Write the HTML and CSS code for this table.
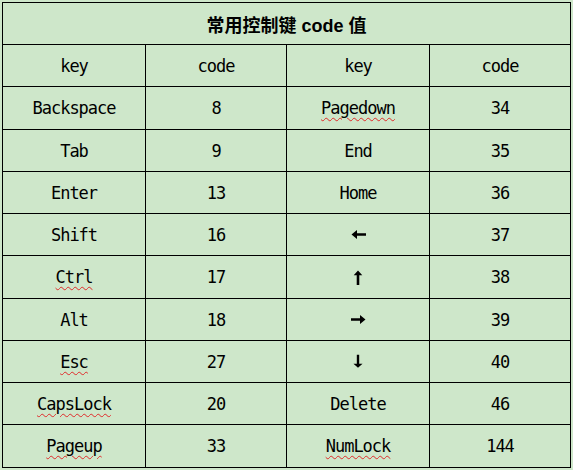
FILE: index.html
```
<!DOCTYPE html>
<html lang="zh">
<head>
<meta charset="utf-8">
<title>常用控制键 code 值</title>
<link rel="stylesheet" href="styles.css">
</head>
<body>
<div class="sheet">
  <div class="grid">
    <div class="cell title">常用控制键 code 值</div>

    <div class="cell">key</div><div class="cell">code</div><div class="cell">key</div><div class="cell">code</div>

    <div class="cell">Backspace</div><div class="cell">8</div><div class="cell"><span class="spell">Pagedown</span></div><div class="cell">34</div>

    <div class="cell">Tab</div><div class="cell">9</div><div class="cell">End</div><div class="cell">35</div>

    <div class="cell">Enter</div><div class="cell">13</div><div class="cell">Home</div><div class="cell">36</div>

    <div class="cell">Shift</div><div class="cell">16</div>
    <div class="cell"><svg class="arr-h" viewBox="0 0 15 11" aria-label="←"><path d="M0.5 5.5 L6 1 L6 4.3 L15 4.3 L15 6.7 L6 6.7 L6 10 Z" fill="#000"/></svg></div>
    <div class="cell">37</div>

    <div class="cell"><span class="spell">Ctrl</span></div><div class="cell">17</div>
    <div class="cell"><svg class="arr-v" viewBox="0 0 9 14" aria-label="↑"><path d="M4.5 0.5 L8.5 5 L5.7 5 L5.7 14 L3.3 14 L3.3 5 L0.5 5 Z" fill="#000"/></svg></div>
    <div class="cell">38</div>

    <div class="cell">Alt</div><div class="cell">18</div>
    <div class="cell"><svg class="arr-h" viewBox="0 0 15 11" aria-label="→"><path d="M14.5 5.5 L9 1 L9 4.3 L0 4.3 L0 6.7 L9 6.7 L9 10 Z" fill="#000"/></svg></div>
    <div class="cell">39</div>

    <div class="cell"><span class="spell">Esc</span></div><div class="cell">27</div>
    <div class="cell"><svg class="arr-v" viewBox="0 0 11 15" aria-label="↓"><path d="M5.5 14.5 L10.5 10 L6.8 10 L6.8 0 L4.2 0 L4.2 10 L0.5 10 Z" fill="#000"/></svg></div>
    <div class="cell">40</div>

    <div class="cell"><span class="spell">CapsLock</span></div><div class="cell">20</div><div class="cell">Delete</div><div class="cell">46</div>

    <div class="cell"><span class="spell">Pageup</span></div><div class="cell">33</div><div class="cell"><span class="spell">NumLock</span></div><div class="cell">144</div>
  </div>
</div>
</body>
</html>
```
FILE: styles.css
```
html, body {
  margin: 0;
  padding: 0;
  background: #cee7ca;
}

.sheet {
  padding: 2px 0 0 2px;
  width: 571px;
  height: 468px;
  overflow: hidden;
}

.grid {
  display: grid;
  width: 569px;
  box-sizing: border-box;
  grid-template-columns: 142px 140px 142px 140px;
  grid-template-rows: 41px 41px 42px 41px 41px 41px 42px 41px 41px 41px 42px;
  gap: 1px;
  padding: 1px;
  background: #000;
}

.cell {
  background: #cee7ca;
  display: flex;
  align-items: center;
  justify-content: center;
  font-family: "DejaVu Sans Mono", monospace;
  font-size: 17px;
  letter-spacing: -1px;
  color: #000;
  white-space: nowrap;
}

.title {
  grid-column: 1 / 5;
  font-family: "Liberation Sans", "Noto Sans CJK SC", sans-serif;
  font-weight: bold;
  font-size: 18px;
  letter-spacing: 0;
  padding-top: 1px;
}

.spell {
  text-decoration: underline wavy #e02a2a;
  text-decoration-thickness: 1px;
  text-underline-offset: 3px;
}

.arr-h {
  width: 15px;
  height: 11px;
  display: block;
}

.arr-v {
  width: 10px;
  height: 15px;
  display: block;
}
```
